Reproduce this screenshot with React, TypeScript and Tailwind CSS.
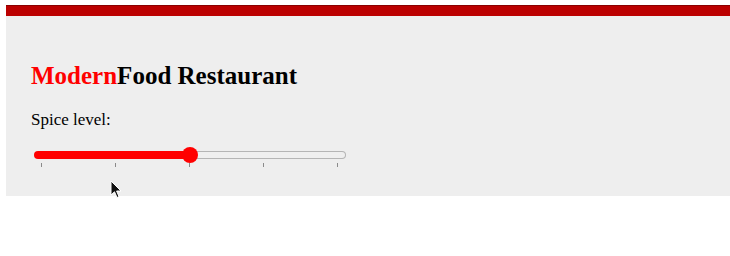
import React from "react";

export default function App() {
  const ticks = [0, 1, 2, 3, 4];
  return (
    <div className="relative w-[730px] h-[256px] bg-white overflow-hidden pl-[6px] pt-[5px] font-['Liberation_Serif',serif]">
      <div className="h-[11px] bg-[#bb0000] border-t border-[#8a0000]" />
      <div className="h-[180px] bg-[#eeeeee] pl-[25px] pt-[46px]">
        <h2 className="text-[25px] leading-[27px] font-bold text-black">
          <span className="text-[#ff0000]">Modern</span>Food Restaurant
        </h2>
        <p className="mt-[22px] text-[17px] leading-[18px] text-black">Spice level:</p>
        <div className="mt-[18px] ml-[3px] w-[312px] flex flex-col">
          <div className="flex items-center h-[16px]">
            <div className="w-[152px] h-[8px] rounded-l-full bg-[#ff0000]" />
            <div className="relative z-10 -mx-[4px] w-[16px] h-[16px] rounded-full bg-[#ff0000]" />
            <div className="flex-1 h-[8px] rounded-r-full bg-[#efefef] border border-l-0 border-[#b5b5b5]" />
          </div>
          <div className="flex justify-between pl-[7px] pr-[8px]">
            {ticks.map((t) => (
              <div key={t} className="w-px h-[4px] bg-[#8a8a8a]" />
            ))}
          </div>
        </div>
      </div>
      <svg
        className="absolute left-[110px] top-[180px]"
        width="14"
        height="20"
        viewBox="0 0 14 20"
      >
        <path
          d="M1 1 L1 15 L4.5 11.8 L7 17.5 L9 16.6 L6.6 11 L11 11 Z"
          fill="#111"
          stroke="#fff"
          strokeWidth="1"
          strokeLinejoin="round"
        />
      </svg>
    </div>
  );
}
